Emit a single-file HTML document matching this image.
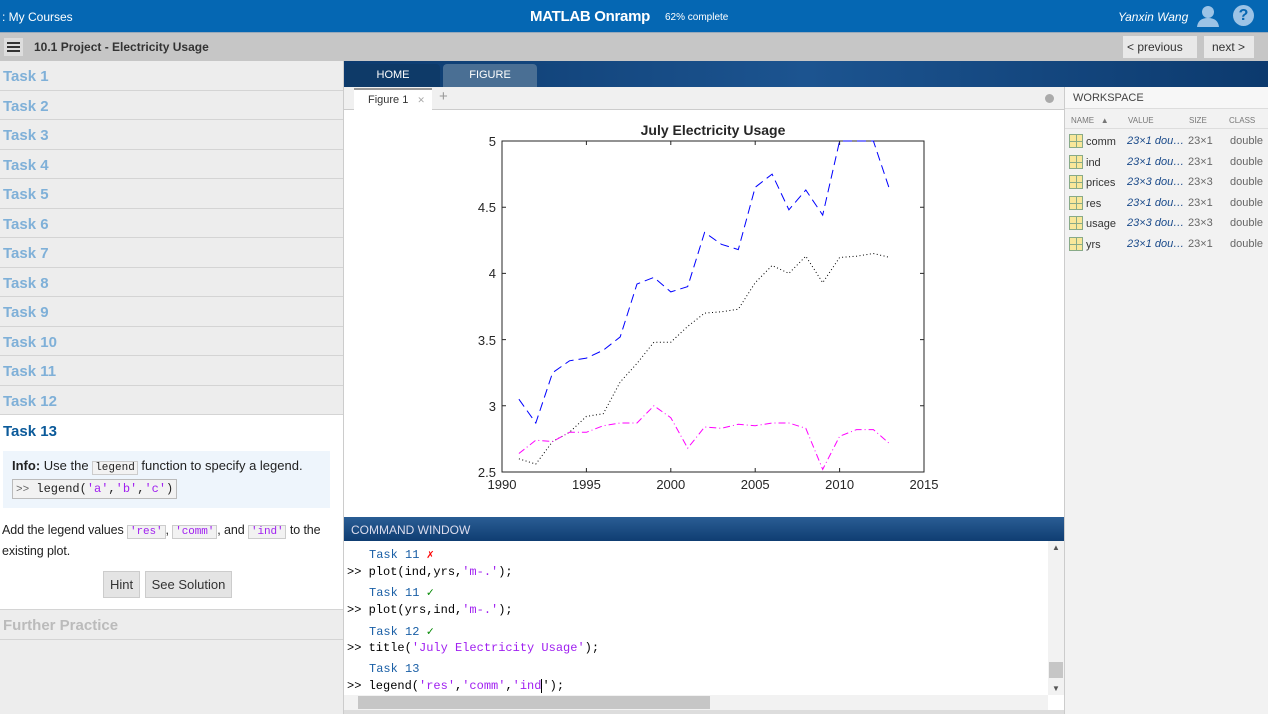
<!DOCTYPE html>
<html><head><meta charset="utf-8"><style>
*{box-sizing:border-box;margin:0;padding:0}
body{width:1268px;height:714px;overflow:hidden;font-family:"Liberation Sans",sans-serif;background:#fff;position:relative}
.abs{position:absolute}
.top{left:0;top:0;width:1268px;height:32px;background:#0567b3;color:#fff}
.sub{left:0;top:32px;width:1268px;height:29px;background:#c6c6c6;border-top:1px solid #9ab}
.left{left:0;top:61px;width:344px;height:653px;background:#ededed;border-right:1px solid #ccc}
.task{height:29.5px;border-bottom:1px solid #d4d4d4;color:#7fb0d8;font-weight:bold;font-size:15px;padding:7px 3px}
.code{font-family:"Liberation Mono",monospace;font-size:11px;background:#f2f2f2;border:1px solid #ccc;padding:0 2px;color:#a020f0}
.btn{display:inline-block;background:#e4e4e4;border:1px solid #ccc;font-size:13px;color:#333;padding:5px 6px}
.mono{font-family:"Liberation Mono",monospace;font-size:12px}
.ws td{font-size:11px;color:#666;height:20.5px;white-space:nowrap}
.ic{display:inline-block;width:14px;height:14px;border:1px solid #8a8;background:linear-gradient(#8a8,#8a8) 6px 0/1px 14px no-repeat,linear-gradient(#8a8,#8a8) 0 6px/14px 1px no-repeat,#f8e79a;vertical-align:-3px;margin-right:3px}
</style></head><body>
<div class="abs top">
 <div class="abs" style="left:2px;top:10px;font-size:12px">: My Courses</div>
 <div class="abs" style="left:530px;top:8px;font-size:15px;font-weight:bold;letter-spacing:-0.3px">MATLAB Onramp</div>
 <div class="abs" style="left:665px;top:12px;font-size:10px">62% complete</div>
 <div class="abs" style="left:1118px;top:10px;font-size:12px;font-style:italic">Yanxin Wang</div>
 <svg class="abs" style="left:1196px;top:5px" width="24" height="22"><circle cx="12" cy="7" r="6" fill="#9cc3e6"/><path d="M1 22 Q2 13 12 13 Q22 13 23 22Z" fill="#9cc3e6"/></svg>
 <div class="abs" style="left:1233px;top:5px;width:21px;height:21px;border-radius:50%;background:#9cc3e6;color:#0567b3;font-weight:bold;font-size:16px;text-align:center;line-height:21px">?</div>
</div>
<div class="abs sub">
 <div class="abs" style="left:4px;top:5px;width:19px;height:18px;background:#ddd"><div style="margin:4px 3px;height:10px;border-top:2px solid #333;border-bottom:2px solid #333;position:relative"><div style="position:absolute;top:2px;left:0;right:0;border-top:2px solid #333"></div></div></div>
 <div class="abs" style="left:34px;top:7px;font-size:12px;font-weight:bold;color:#333">10.1 Project - Electricity Usage</div>
 <div class="abs" style="left:1123px;top:3px;width:74px;height:22px;background:#e8e8e8;font-size:12px;color:#333;padding:4px 4px">&lt; previous</div>
 <div class="abs" style="left:1204px;top:3px;width:50px;height:22px;background:#e8e8e8;font-size:12px;color:#333;padding:4px 8px">next &gt;</div>
</div>
<div class="abs left">
 <div class="task">Task 1</div><div class="task">Task 2</div><div class="task">Task 3</div><div class="task">Task 4</div><div class="task">Task 5</div><div class="task">Task 6</div><div class="task">Task 7</div><div class="task">Task 8</div><div class="task">Task 9</div><div class="task">Task 10</div><div class="task">Task 11</div><div class="task">Task 12</div>
 <div style="background:#fff;height:195px;border-bottom:1px solid #d4d4d4;position:relative">
  <div style="color:#0b5a9a;font-weight:bold;font-size:15px;padding:8px 3px">Task 13</div>
  <div class="abs" style="left:3px;top:36px;width:327px;height:57px;background:#eef5fc;padding:7px 9px;font-size:13px;color:#222"><b>Info:</b> Use the <span class="code" style="color:#222">legend</span> function to specify a legend.
   <div style="margin-top:5px;display:inline-block;border:1px solid #bbb;background:#f2f2f2;padding:2px 3px" class="mono"><span style="color:#666;font-size:11px">&gt;&gt;</span> legend(<span style="color:#a020f0">'a'</span>,<span style="color:#a020f0">'b'</span>,<span style="color:#a020f0">'c'</span>)</div></div>
  <div class="abs" style="left:2px;top:106px;font-size:12.5px;color:#222;line-height:19px;width:340px;letter-spacing:-0.1px">Add the legend values <span class="code">'res'</span>, <span class="code">'comm'</span>, and <span class="code">'ind'</span> to the existing plot.</div>
  <div class="abs" style="left:103px;top:156px"><span class="btn">Hint</span> <span class="btn">See Solution</span></div>
 </div>
 <div class="task" style="color:#bbb">Further Practice</div>
</div>
<!-- toolstrip -->
<div class="abs" style="left:344px;top:61px;width:924px;height:26px;background:linear-gradient(90deg,#0c3a6e,#1c5490 50%,#0c3a6e)">
 <div class="abs" style="left:2px;top:3px;width:94px;height:23px;background:#0e3a68;color:#fff;font-size:11px;text-align:center;line-height:23px;border-radius:4px 4px 0 0">HOME</div>
 <div class="abs" style="left:99px;top:3px;width:94px;height:23px;background:#4a6f94;color:#fff;font-size:11px;text-align:center;line-height:23px;border-radius:4px 4px 0 0">FIGURE</div>
</div>
<div class="abs" style="left:344px;top:87px;width:720px;height:23px;background:#f0f0f0;border-bottom:1px solid #ccc">
 <div class="abs" style="left:10px;top:1px;width:78px;height:22px;background:#fff;border-top:2px solid #999;font-size:11px;color:#333;padding:4px 0 0 14px;white-space:nowrap">Figure 1 <span style="color:#aaa;font-size:9px;margin-left:6px">✕</span></div>
 <div class="abs" style="left:95px;top:1px;color:#999;font-size:15px">+</div>
 <div class="abs" style="left:701px;top:7px;width:9px;height:9px;border-radius:50%;background:#aaa"></div>
</div>
<svg class="abs" style="left:344px;top:110px" width="720" height="407" viewBox="344 110 720 407">
 <rect x="344" y="110" width="720" height="407" fill="#fff"/>
 <rect x="502" y="141" width="422" height="331" fill="#fff" stroke="#262626" stroke-width="1"/>
 <g stroke="#262626" stroke-width="1">
 <path d="M586.4 472v-4M670.8 472v-4M755.2 472v-4M839.6 472v-4M586.4 141v4M670.8 141v4M755.2 141v4M839.6 141v4M502 405.8h4M502 339.6h4M502 273.4h4M502 207.2h4M924 405.8h-4M924 339.6h-4M924 273.4h-4M924 207.2h-4"/></g>
 <g font-size="13" fill="#262626" font-family="Liberation Sans" text-anchor="middle">
 <text x="502" y="489">1990</text><text x="586.4" y="489">1995</text><text x="670.8" y="489">2000</text><text x="755.2" y="489">2005</text><text x="839.6" y="489">2010</text><text x="924" y="489">2015</text>
 <g text-anchor="end"><text x="496" y="477">2.5</text><text x="496" y="411">3</text><text x="496" y="345">3.5</text><text x="496" y="278">4</text><text x="496" y="212">4.5</text><text x="496" y="146">5</text></g>
 <text x="713" y="135" font-weight="bold" font-size="14">July Electricity Usage</text></g>
 <polyline fill="none" stroke="#0000ff" stroke-dasharray="9,5" points="518.9,399.2 535.8,423 552.6,372.7 569.5,360.8 586.4,358.1 603.3,350.2 620.2,336.9 637,284 653.9,277.4 670.8,291.9 687.7,286.6 704.6,232.4 721.4,244.3 738.3,249.6 755.2,187.3 772.1,174.1 788.9,209.8 805.8,190 822.7,215.1 839.6,141 856.5,141 873.4,141 890.2,191.3"/>
 <polyline fill="none" stroke="#000" stroke-dasharray="1,2.5" points="518.9,458.8 535.8,464.1 552.6,441.5 569.5,432.3 586.4,416.4 603.3,413.7 620.2,382 637,363.4 653.9,342.2 670.8,342.2 687.7,326.4 704.6,313.1 721.4,311.8 738.3,309.2 755.2,282.7 772.1,265.5 788.9,273.4 805.8,256.2 822.7,282.7 839.6,257.5 856.5,256.2 873.4,253.5 890.2,257.5"/>
 <polyline fill="none" stroke="#ff00ff" stroke-dasharray="7,3,1,3" points="518.9,453.5 535.8,440.2 552.6,441.5 569.5,432.3 586.4,432.3 603.3,425.7 620.2,423 637,423 653.9,405.8 670.8,417.7 687.7,448.2 704.6,427 721.4,428.3 738.3,424.3 755.2,425.7 772.1,423 788.9,423 805.8,428.3 822.7,469.4 839.6,436.3 856.5,429.6 873.4,429.6 890.2,444.2"/>
</svg>
<!-- command window -->
<div class="abs" style="left:344px;top:517px;width:720px;height:24px;background:linear-gradient(#2a5d94,#0f3d72);color:#dde;font-size:12px;padding:6px 7px">COMMAND WINDOW</div>
<div class="abs mono" style="left:344px;top:541px;width:704px;height:154px;background:#fff;color:#000;overflow:hidden">
 <div class="abs" style="left:25px;top:6px;color:#1a5fa6">Task 11 <span style="color:red">✗</span></div>
 <div class="abs" style="left:3px;top:24px">&gt;&gt; plot(ind,yrs,<span style="color:#a020f0">'m-.'</span>);</div>
 <div class="abs" style="left:25px;top:44px;color:#1a5fa6">Task 11 <span style="color:#080">✓</span></div>
 <div class="abs" style="left:3px;top:62px">&gt;&gt; plot(yrs,ind,<span style="color:#a020f0">'m-.'</span>);</div>
 <div class="abs" style="left:25px;top:83px;color:#1a5fa6">Task 12 <span style="color:#080">✓</span></div>
 <div class="abs" style="left:3px;top:100px">&gt;&gt; title(<span style="color:#a020f0">'July Electricity Usage'</span>);</div>
 <div class="abs" style="left:25px;top:121px;color:#1a5fa6">Task 13</div>
 <div class="abs" style="left:3px;top:138px">&gt;&gt; legend(<span style="color:#a020f0">'res'</span>,<span style="color:#a020f0">'comm'</span>,<span style="color:#a020f0">'ind</span><span style="border-left:1px solid #000"></span>');</div>
</div>
<div class="abs" style="left:1048px;top:541px;width:16px;height:154px;background:#f2f2f2"><div style="position:absolute;top:121px;left:1px;width:14px;height:16px;background:#c6c6c6"></div><div style="position:absolute;top:2px;left:4px;font-size:8px;color:#555">▲</div><div style="position:absolute;bottom:2px;left:4px;font-size:8px;color:#555">▼</div></div>
<div class="abs" style="left:344px;top:695px;width:704px;height:15px;background:#f2f2f2"><div style="position:absolute;left:14px;top:1px;width:352px;height:13px;background:#c6c6c6"></div></div>
<div class="abs" style="left:344px;top:710px;width:924px;height:4px;background:#ddd"></div>
<!-- workspace -->
<div class="abs" style="left:1064px;top:87px;width:204px;height:627px;background:#f2f2f2;border-left:1px solid #ccc">
 <div style="height:22px;font-size:11px;color:#444;padding:5px 8px;background:#f7f7f7;border-bottom:1px solid #ddd">WORKSPACE</div>
 <div style="font-size:8px;color:#777;padding:7px 0 0 6px;position:relative;height:20px;border-bottom:1px solid #ddd"><span>NAME &nbsp; ▲</span><span class="abs" style="left:63px;top:7px">VALUE</span><span class="abs" style="left:124px;top:7px">SIZE</span><span class="abs" style="left:164px;top:7px">CLASS</span></div>
 <table class="ws" style="border-collapse:collapse;margin-left:4px;margin-top:2px">
 <tr><td style="width:58px;color:#333"><i class="ic"></i>comm</td><td style="width:61px;color:#1a4a8a;font-style:italic">23×1 dou…</td><td style="width:42px">23×1</td><td>double</td></tr>
 <tr><td style="color:#333"><i class="ic"></i>ind</td><td style="color:#1a4a8a;font-style:italic">23×1 dou…</td><td>23×1</td><td>double</td></tr>
 <tr><td style="color:#333"><i class="ic"></i>prices</td><td style="color:#1a4a8a;font-style:italic">23×3 dou…</td><td>23×3</td><td>double</td></tr>
 <tr><td style="color:#333"><i class="ic"></i>res</td><td style="color:#1a4a8a;font-style:italic">23×1 dou…</td><td>23×1</td><td>double</td></tr>
 <tr><td style="color:#333"><i class="ic"></i>usage</td><td style="color:#1a4a8a;font-style:italic">23×3 dou…</td><td>23×3</td><td>double</td></tr>
 <tr><td style="color:#333"><i class="ic"></i>yrs</td><td style="color:#1a4a8a;font-style:italic">23×1 dou…</td><td>23×1</td><td>double</td></tr>
 </table>
</div>
</body></html>
